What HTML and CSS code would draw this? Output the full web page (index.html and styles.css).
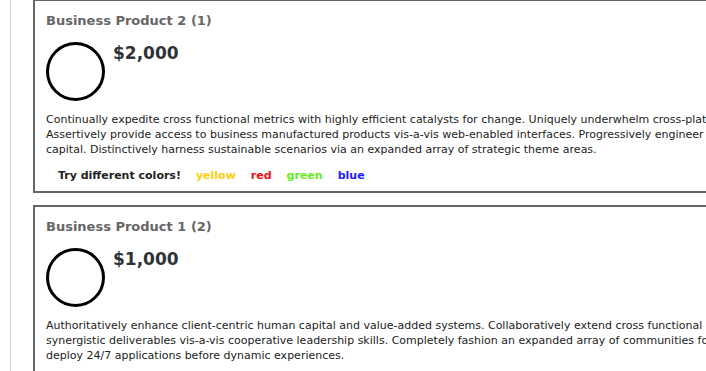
FILE: index.html
```html
<!DOCTYPE html>
<html lang="en">
<head>
<meta charset="utf-8">
<title>Business Products</title>
<link rel="stylesheet" href="styles.css">
</head>
<body>
<div class="page">
  <div class="products">
    <section class="card">
      <h2 class="card-title">Business Product 2 (1)</h2>
      <div class="card-head">
        <div class="logo"></div>
        <div class="price">$2,000</div>
      </div>
      <p class="desc">Continually expedite cross functional metrics with highly efficient catalysts for change. Uniquely underwhelm cross-platform e-markets.<br>Assertively provide access to business manufactured products vis-a-vis web-enabled interfaces. Progressively engineer intellectual<br>capital. Distinctively harness sustainable scenarios via an expanded array of strategic theme areas.</p>
      <div class="colors">
        <span class="colors-label">Try different colors!</span>
        <a class="swatch yellow">yellow</a>
        <a class="swatch red">red</a>
        <a class="swatch green">green</a>
        <a class="swatch blue">blue</a>
      </div>
    </section>
    <section class="card">
      <h2 class="card-title">Business Product 1 (2)</h2>
      <div class="card-head">
        <div class="logo"></div>
        <div class="price">$1,000</div>
      </div>
      <p class="desc">Authoritatively enhance client-centric human capital and value-added systems. Collaboratively extend cross functional e-services and<br>synergistic deliverables vis-a-vis cooperative leadership skills. Completely fashion an expanded array of communities for<br>deploy 24/7 applications before dynamic experiences.</p>
      <div class="colors">
        <span class="colors-label">Try different colors!</span>
        <a class="swatch yellow">yellow</a>
        <a class="swatch red">red</a>
        <a class="swatch green">green</a>
        <a class="swatch blue">blue</a>
      </div>
    </section>
  </div>
</div>
</body>
</html>
```
FILE: styles.css
```css
html, body {
  margin: 0;
  padding: 0;
  background: #fff;
  overflow: hidden;
}
body {
  font-family: "DejaVu Sans", Verdana, sans-serif;
  color: #222;
}
.page {
  margin-left: 10px;
  margin-top: -1px;
  border-left: 1px solid #d4d4d4;
  padding-left: 22px;
  min-height: 400px;
  width: 900px;
}
.products {
  display: flex;
  flex-direction: column;
  gap: 12px;
}
.card {
  border: 2px solid #666;
  padding: 12px 11px 8px 11px;
  width: 840px;
}
.card-title {
  margin: 0 0 13px 0;
  font-size: 13px;
  line-height: 16px;
  font-weight: bold;
  color: #666;
}
.card-head {
  display: flex;
  align-items: flex-start;
  gap: 8px;
}
.logo {
  width: 59px;
  height: 59px;
  box-sizing: border-box;
  border: 3px solid #000;
  border-radius: 50%;
}
.price {
  font-size: 17px;
  line-height: 20px;
  font-weight: bold;
  color: #2e3338;
  margin-top: 1px;
}
.desc {
  margin: 11px 0 0 0;
  font-size: 11px;
  line-height: 15px;
  white-space: nowrap;
  color: #222;
}
.colors {
  display: flex;
  gap: 15px;
  margin-top: 11px;
  padding-left: 12px;
  font-size: 11px;
  line-height: 15px;
  font-weight: bold;
}
.colors-label {
  color: #222;
}
.swatch {
  cursor: pointer;
}
.yellow { color: #ffcc11; }
.red { color: #ee1111; }
.green { color: #66ee22; }
.blue { color: #2222ff; }
```
